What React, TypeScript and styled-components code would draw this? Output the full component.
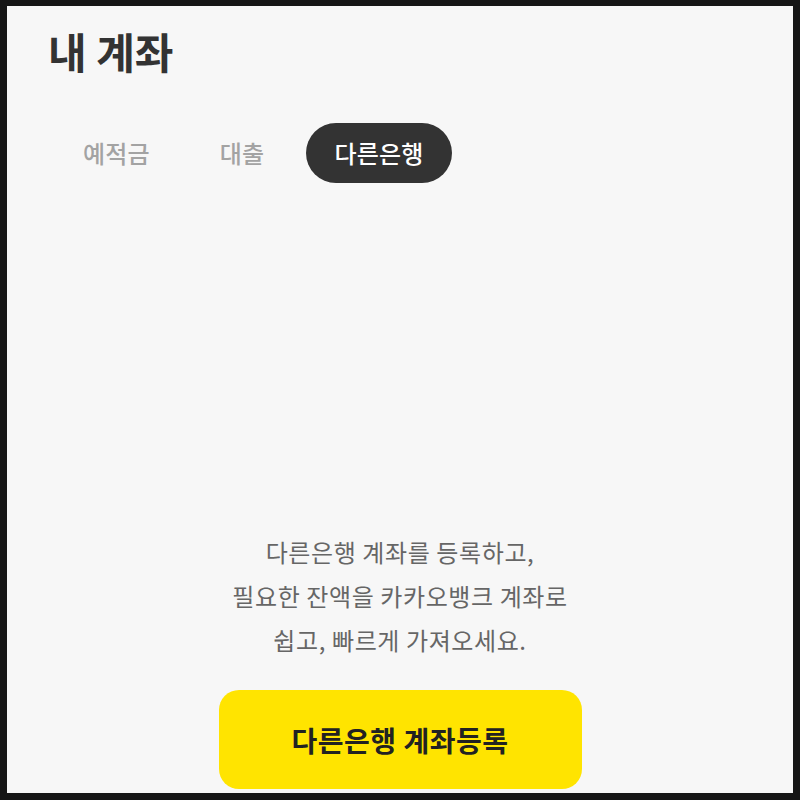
import React, { useState } from 'react'
import styled, { createGlobalStyle } from 'styled-components'

const GlobalStyle = createGlobalStyle`
    html, body {
        margin: 0;
        padding: 0;
        background: #161616;
    }

    * {
        box-sizing: border-box;
    }
`

const tabs = ['예적금', '대출', '다른은행']

export default function App() {
    const [active, setActive] = useState('다른은행')

    return (
        <>
            <GlobalStyle />
            <Frame>
                <Screen>
                    <Title>내 계좌</Title>

                    <TabRow>
                        {tabs.map(tab => (
                            <Tab key={tab} $active={tab === active} onClick={() => setActive(tab)}>
                                {tab}
                            </Tab>
                        ))}
                    </TabRow>

                    <EmptyState>
                        <Message>
                            다른은행 계좌를 등록하고,
                            <br />
                            필요한 잔액을 카카오뱅크 계좌로
                            <br />
                            쉽고, 빠르게 가져오세요.
                        </Message>
                        <RegisterButton>다른은행 계좌등록</RegisterButton>
                    </EmptyState>
                </Screen>
            </Frame>
        </>
    )
}

const Frame = styled.div`
    width: 800px;
    height: 800px;
    padding: 6px 7px 7px 7px;
`

const Screen = styled.main`
    height: 100%;
    display: flex;
    flex-direction: column;
    padding: 16px 0 4px 41px;
    background: #f7f7f7;
    font-family: "Noto Sans CJK KR", "Noto Sans", sans-serif;
    overflow: hidden;
`

const Title = styled.h1`
    margin: 0;
    color: #333333;
    font-size: 42px;
    font-weight: 700;
    line-height: 1.4;
    letter-spacing: 0;
`

const TabRow = styled.nav`
    display: flex;
    gap: 14px;
    margin: 42px 0 0 7px;
`

const Tab = styled.button<{ $active: boolean }>`
    height: 60px;
    padding: 0 28px;
    border: 0;
    border-radius: 30px;
    background: ${p => (p.$active ? '#333333' : 'transparent')};
    color: ${p => (p.$active ? '#ffffff' : '#a3a3a3')};
    font-family: inherit;
    font-size: 24px;
    font-weight: 500;
    letter-spacing: 0.2px;
    cursor: pointer;
`

const EmptyState = styled.section`
    margin-top: auto;
    margin-left: -41px;
    display: flex;
    flex-direction: column;
    align-items: center;
    gap: 28px;
`

const Message = styled.p`
    margin: 0;
    color: #666666;
    font-size: 24px;
    font-weight: 400;
    line-height: 44px;
    letter-spacing: 0.6px;
    text-align: center;
`

const RegisterButton = styled.button`
    width: 363px;
    height: 99px;
    border: 0;
    border-radius: 20px;
    background: #ffe400;
    color: #222222;
    font-family: inherit;
    font-size: 28px;
    font-weight: 700;
    letter-spacing: 0.5px;
    cursor: pointer;
`
